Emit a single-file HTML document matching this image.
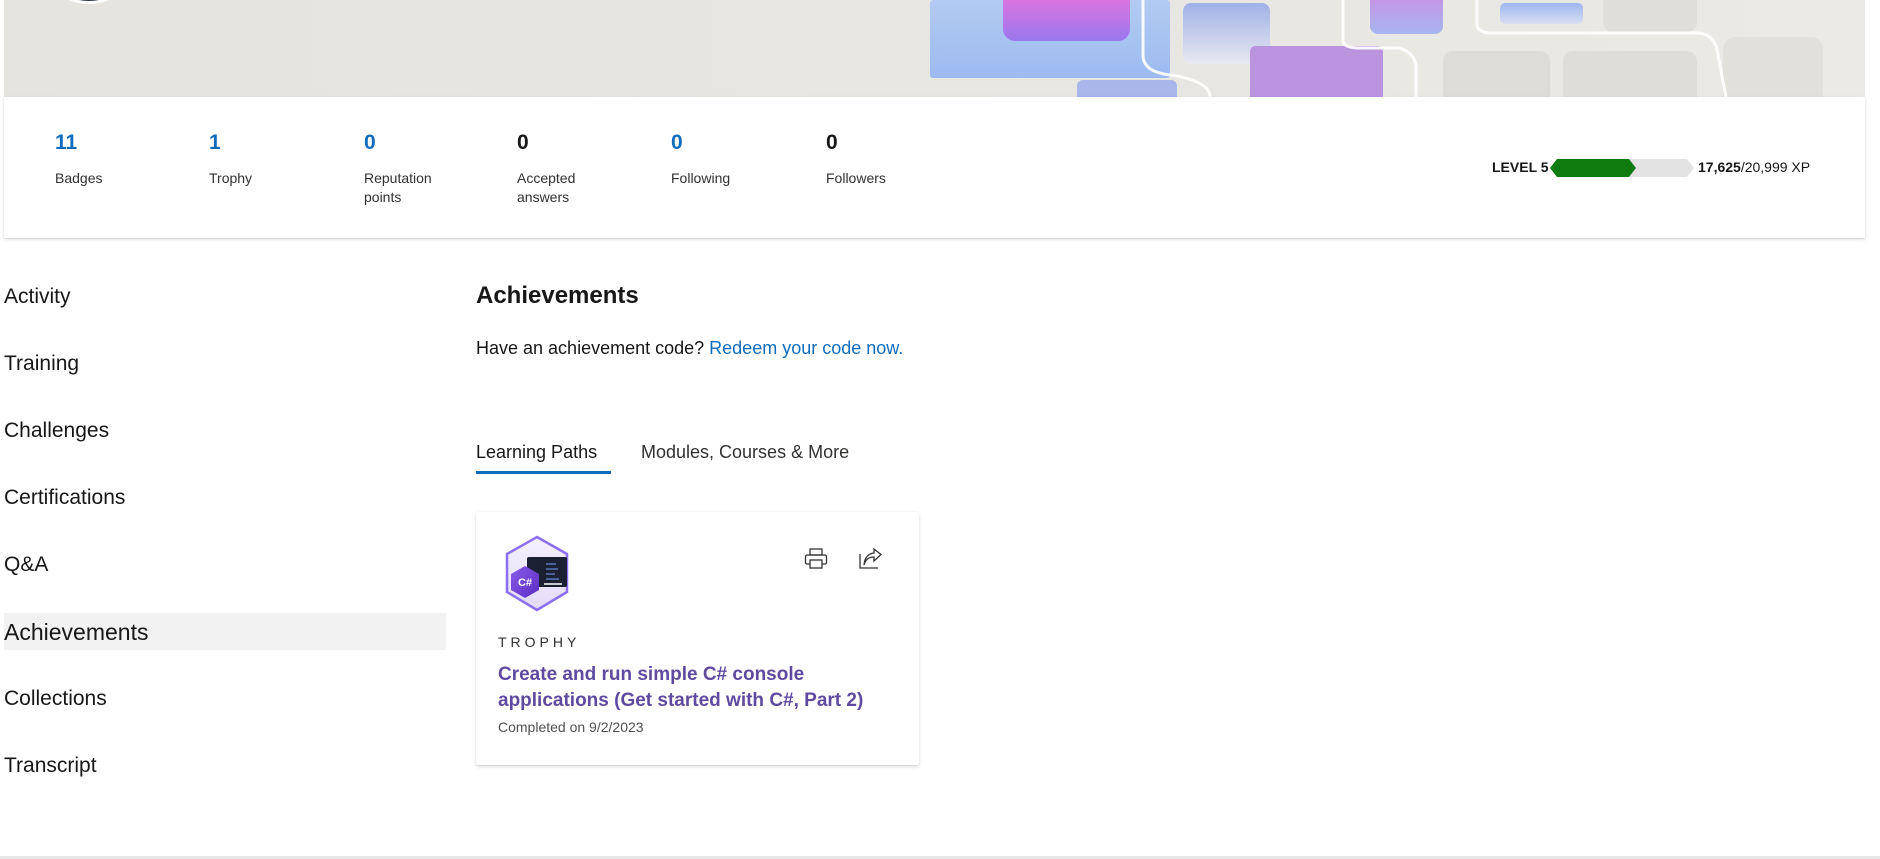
<!DOCTYPE html>
<html><head><meta charset="utf-8"><style>
*{margin:0;padding:0;box-sizing:border-box}
body{width:1880px;height:859px;background:#fff;font-family:"Liberation Sans",sans-serif;color:#171717;position:relative;overflow:hidden}
.a{position:absolute}
.banner{left:4px;top:0;width:1861px;height:97px;background:linear-gradient(90deg,#e6e4df 0%,#e8e6e1 60%,#eceae6 100%);overflow:hidden}
.stats{left:4px;top:97px;width:1861px;height:141px;background:#fff;box-shadow:0 1.6px 3.6px rgba(0,0,0,.13),0 .3px .9px rgba(0,0,0,.11)}
.num{font-size:21px;font-weight:bold;top:131px}
.lbl{font-size:14px;color:#323130;top:169px;line-height:19px}
.blue{color:#0f6cbd}
.nav{left:4px;font-size:21px;color:#171717}
.card{left:476px;top:512px;width:443px;height:253px;background:#fff;box-shadow:0 1.6px 3.6px rgba(0,0,0,.13),0 .3px .9px rgba(0,0,0,.11);border-radius:2px}
</style></head><body>
<div class="a banner">
  <div class="a" style="left:926px;top:0;width:240px;height:78px;background:linear-gradient(180deg,#a9c6f5,#8fb3f2);opacity:.85;border-radius:3px"></div>
  <div class="a" style="left:999px;top:0;width:127px;height:41px;background:linear-gradient(180deg,#d974e0,#9a78ee);border-radius:0 0 12px 12px"></div>
  <div class="a" style="left:1179px;top:3px;width:87px;height:61px;background:linear-gradient(180deg,#9fb1e6,#e8e8f0);border-radius:8px"></div>
  <div class="a" style="left:1073px;top:80px;width:100px;height:17px;background:#a9b6ea;border-radius:6px 6px 0 0"></div>
  <div class="a" style="left:1246px;top:46px;width:133px;height:51px;background:#bb94e0;border-radius:5px 5px 0 0"></div>
  <div class="a" style="left:1366px;top:0;width:73px;height:34px;background:linear-gradient(180deg,#c397e6,#a7b6ef);border-radius:0 0 8px 8px"></div>
  <div class="a" style="left:1496px;top:3px;width:83px;height:21px;background:linear-gradient(180deg,#9eb6f0,#d8dff2);border-radius:5px"></div>
  <div class="a" style="left:1439px;top:51px;width:107px;height:46px;background:#dedcd7;border-radius:10px 10px 0 0"></div>
  <div class="a" style="left:1559px;top:51px;width:134px;height:46px;background:#dfddd8;border-radius:10px 10px 0 0"></div>
  <div class="a" style="left:1719px;top:37px;width:100px;height:60px;background:#e2e0db;border-radius:12px 12px 0 0"></div>
  <div class="a" style="left:1599px;top:0;width:94px;height:32px;background:#e0ded9;border-radius:0 0 10px 10px"></div>
  <svg class="a" style="left:0;top:0" width="1861" height="97"><g fill="none" stroke="#fff" stroke-width="3" opacity=".9"><path d="M1139 0 V55 Q1139 70 1160 74 Q1206 80 1206 97"/><path d="M1339 0 V40 Q1339 48 1355 48 H1395 Q1410 52 1412 66 V97"/><path d="M1473 0 V24 Q1473 33 1488 33 H1695 Q1712 35 1714 55 L1722 97"/></g></svg>
  <div class="a" style="left:50px;top:-40px;width:70px;height:44px;border-radius:50%;border:3px solid #fff;background:#2c3548"></div>
</div>
<div class="a stats">
</div>
<div class="a num blue" style="left:55px">11</div><div class="a lbl" style="left:55px">Badges</div>
<div class="a num blue" style="left:209px">1</div><div class="a lbl" style="left:209px">Trophy</div>
<div class="a num blue" style="left:364px">0</div><div class="a lbl" style="left:364px">Reputation<br>points</div>
<div class="a num" style="left:517px">0</div><div class="a lbl" style="left:517px">Accepted<br>answers</div>
<div class="a num blue" style="left:671px">0</div><div class="a lbl" style="left:671px">Following</div>
<div class="a num" style="left:826px">0</div><div class="a lbl" style="left:826px">Followers</div>
<div class="a" style="left:1492px;top:159px;font-size:14px;font-weight:bold">LEVEL 5</div>
<svg class="a" style="left:1550px;top:159px" width="145" height="18"><polygon points="7,0 137,0 144,9 137,18 7,18 0,9" fill="#e3e3e3"/><polygon points="7,0 79,0 86,9 79,18 7,18 0,9" fill="#107c10"/></svg>
<div class="a" style="left:1698px;top:159px;font-size:14px"><b>17,625</b>/20,999 XP</div>

<div class="a" style="left:4px;top:613px;width:442px;height:37px;background:#f2f2f2"></div>
<div class="a nav" style="top:285px">Activity</div>
<div class="a nav" style="top:352px">Training</div>
<div class="a nav" style="top:419px">Challenges</div>
<div class="a nav" style="top:486px">Certifications</div>
<div class="a nav" style="top:553px">Q&amp;A</div>
<div class="a nav" style="top:619px;font-size:23px">Achievements</div>
<div class="a nav" style="top:687px">Collections</div>
<div class="a nav" style="top:754px">Transcript</div>

<div class="a" style="left:476px;top:282px;font-size:24px;font-weight:bold">Achievements</div>
<div class="a" style="left:476px;top:338px;font-size:18px">Have an achievement code? <span class="blue">Redeem your code now.</span></div>
<div class="a" style="left:476px;top:442px;font-size:18px">Learning Paths</div>
<div class="a" style="left:641px;top:442px;font-size:18px;color:#323130">Modules, Courses &amp; More</div>
<div class="a" style="left:476px;top:471px;width:135px;height:3px;background:#0f6cbd"></div>

<div class="a card">
  <svg class="a" style="left:26px;top:22px" width="70" height="80" viewBox="0 0 70 80">
    <defs><linearGradient id="g" x1="0" y1="0" x2="0" y2="1"><stop offset="0" stop-color="#f4f0fd"/><stop offset="1" stop-color="#e4dcf8"/></linearGradient><linearGradient id="p" x1="0" y1="0" x2="1" y2="1"><stop offset="0" stop-color="#8a5ce8"/><stop offset="1" stop-color="#5b2cc4"/></linearGradient></defs>
    <polygon points="35,3 65,20 65,58 35,76 5,58 5,20" fill="url(#g)" stroke="#8c6ef0" stroke-width="2.5"/>
    <rect x="25" y="23" width="40" height="30" rx="2" fill="#1b2133"/>
    <g stroke="#7aa0ff" stroke-width="1"><line x1="44" y1="30" x2="54" y2="30"/><line x1="44" y1="35" x2="56" y2="35"/><line x1="44" y1="40" x2="53" y2="40"/><line x1="44" y1="45" x2="57" y2="45"/></g>
    <line x1="42" y1="50" x2="60" y2="50" stroke="#fff" stroke-width="1.5"/>
    <polygon points="23,32 37,40 37,56 23,64 9,56 9,40" fill="url(#p)"/>
    <text x="23" y="52" font-size="11" font-weight="bold" fill="#fff" text-anchor="middle" font-family="Liberation Sans,sans-serif">C#</text>
  </svg>
  <svg class="a" style="left:328px;top:36px" width="24" height="22" viewBox="0 0 24 22" fill="none" stroke="#333" stroke-width="1.3"><rect x="6" y="1" width="12" height="6"/><rect x="1.5" y="7" width="21" height="9" rx="1.5"/><rect x="6" y="12" width="12" height="8" fill="#fff"/></svg>
  <svg class="a" style="left:383px;top:36px" width="24" height="22" viewBox="0 0 24 22" fill="none" stroke="#333" stroke-width="1.3"><path d="M1 6 V20 H19"/><path d="M5 17 Q7 9 15 9 V13 L22 6.5 L15 1 V5 Q6 6 5 17 Z"/></svg>
  <div class="a" style="left:22px;top:122px;font-size:14px;letter-spacing:4px;color:#323130">TROPHY</div>
  <div class="a" style="left:22px;top:150px;font-size:19px;font-weight:bold;color:#5f4aa0;line-height:26px;width:420px">Create and run simple C# console applications (Get started with C#, Part 2)</div>
  <div class="a" style="left:22px;top:207px;font-size:14px;color:#505050">Completed on 9/2/2023</div>
</div>
<div class="a" style="left:0;top:856px;width:1880px;height:3px;background:#e6e6e6"></div>
</body></html>
